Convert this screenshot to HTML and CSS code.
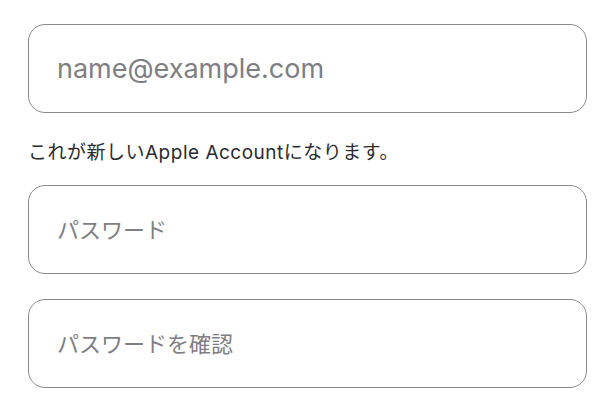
FILE: index.html
```html
<!DOCTYPE html>
<html lang="ja">
	<head>
		<meta charset="UTF-8">
		<title>Apple Account 作成</title>
		<link rel="stylesheet" href="styles.css">
	</head>
	<body>
		<form class="signup">
			<input class="field" type="email" placeholder="name@example.com" />
			<p class="hint">これが新しいApple Accountになります。</p>
			<input class="field field-cjk" type="password" placeholder="パスワード" />
			<input class="field field-cjk" type="password" placeholder="パスワードを確認" />
		</form>
	</body>
</html>
```

FILE: styles.css
```css
html, body {
	margin: 0;
	background-color: #fff;
}
.signup {
	display: flex;
	flex-direction: column;
	padding: 24px 29px 0 28px;
	font-family: "Inter", "Noto Sans CJK JP", sans-serif;
}
.field {
	box-sizing: border-box;
	height: 89px;
	margin: 0 0 25px;
	padding: 0 28px;
	border: 1.5px solid #8a8a8e;
	border-radius: 17px;
	font-family: inherit;
	font-size: 27px;
	color: #1d1d1f;
	background: #fff;
	outline: none;
}
.field::placeholder {
	color: #7e7e83;
}
.field-cjk {
	font-size: 22px;
}
.hint {
	margin: 3px 0 20px;
	line-height: 24px;
	font-size: 19px;
	letter-spacing: 0.5px;
	color: #2b2b2e;
}
```
